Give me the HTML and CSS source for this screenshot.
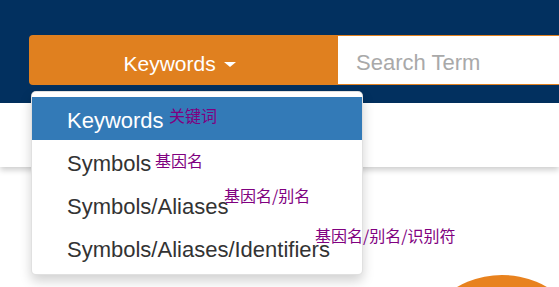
FILE: index.html
```html
<!DOCTYPE html>
<html lang="en">
<head>
    <meta charset="UTF-8">
    <meta name="viewport" content="width=device-width, initial-scale=1.0">
    <title>Search</title>
    <link rel="stylesheet" href="styles.css">
</head>
<body>
    <header class="masthead">
        <div class="search-group">
            <button class="search-type">Keywords <span class="caret"></span></button>
            <input class="search-input" type="text" placeholder="Search Term">

            <ul class="dropdown-menu">
                <li class="menu-item active">Keywords<span class="note note-1">关键词</span></li>
                <li class="menu-item">Symbols<span class="note note-2">基因名</span></li>
                <li class="menu-item">Symbols/Aliases<span class="note note-3">基因名/别名</span></li>
                <li class="menu-item">Symbols/Aliases/Identifiers<span class="note note-4">基因名/别名/识别符</span></li>
            </ul>
        </div>
    </header>

    <nav class="subnav"></nav>

    <main class="content">
        <div class="blob"></div>
    </main>
</body>
</html>
```

FILE: styles.css
```css
* {
    margin: 0;
    padding: 0;
    box-sizing: border-box;
}

html, body {
    height: 100%;
    overflow: hidden;
}

body {
    font-family: "Liberation Sans", Arial, sans-serif;
    background: #fff;
    color: #333;
}

.masthead {
    background: #02305f;
    height: 103px;
    padding: 35px 0 0 29px;
}

.search-group {
    position: relative;
    display: flex;
    height: 50px;
}

.search-type {
    flex-shrink: 0;
    width: 309px;
    background: #e0801f;
    border: none;
    border-radius: 4px 0 0 4px;
    color: #fff;
    font-family: inherit;
    font-size: 21px;
    padding: 7px 8px 0 0;
}

.caret {
    display: inline-block;
    width: 0;
    height: 0;
    margin-left: 2px;
    vertical-align: middle;
    border-top: 5px solid #fff;
    border-left: 6px solid transparent;
    border-right: 6px solid transparent;
}

.search-input {
    flex: 1;
    min-width: 0;
    border: 1px solid #e0801f;
    border-left: none;
    border-right: none;
    background: #fff;
    font-family: inherit;
    font-size: 22px;
    padding: 6px 18px 0;
    outline: none;
}

.search-input::placeholder {
    color: #a9a9a9;
}

.dropdown-menu {
    position: absolute;
    top: 56px;
    left: 2px;
    width: 332px;
    list-style: none;
    background: #fff;
    border: 1px solid rgba(0,0,0,0.12);
    border-radius: 5px;
    box-shadow: 0 6px 12px rgba(0,0,0,0.18);
    padding: 5px 0;
    z-index: 10;
}

.menu-item {
    position: relative;
    font-size: 22px;
    line-height: 31px;
    padding: 8px 35px 4px;
    color: #333;
    white-space: nowrap;
}

.menu-item.active {
    background: #337ab7;
    color: #fff;
}

/* translation overlay */
.note {
    position: absolute;
    font-family: "Noto Sans CJK SC", sans-serif;
    font-size: 16px;
    line-height: 16px;
    color: #800080;
}

.note-1 { left: 137px; top: 10px; }
.note-2 { left: 123px; top: 12px; }
.note-3 { left: 192px; top: 4px; }
.note-4 { left: 283px; top: 1px; }

.subnav {
    height: 64px;
    background: #fff;
    box-shadow: 0 3px 6px rgba(0,0,0,0.2);
    position: relative;
}

.content {
    height: calc(100% - 167px);
    overflow: hidden;
    padding: 108px 0 0 412px;
}

.blob {
    width: 180px;
    height: 180px;
    border-radius: 50%;
    background: #e8821e;
}
```
